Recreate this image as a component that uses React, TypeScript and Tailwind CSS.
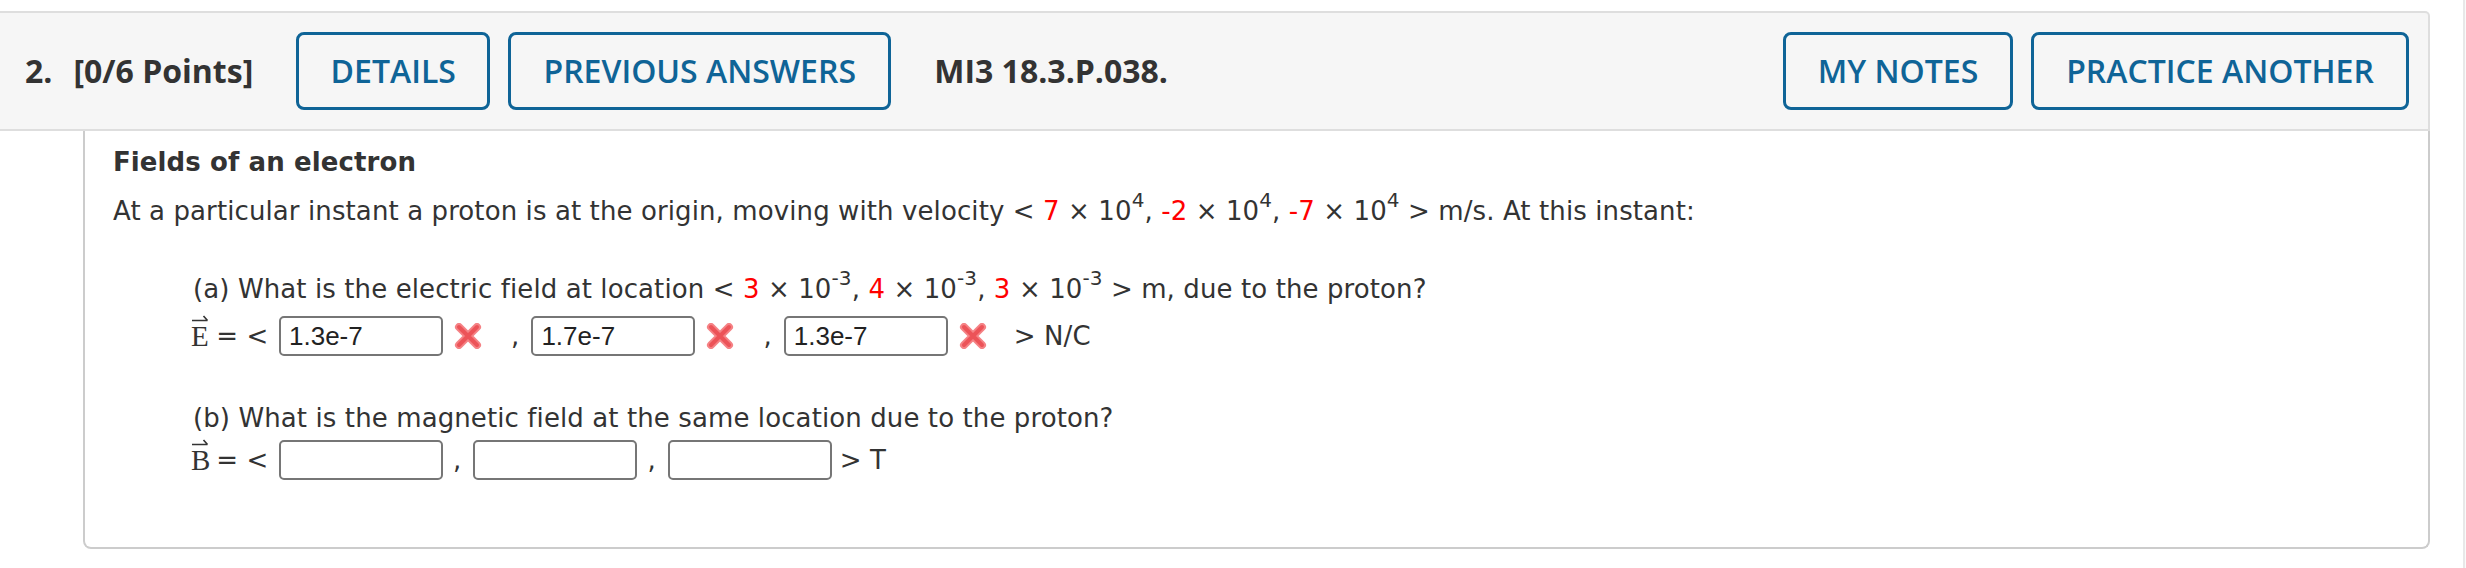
import React from 'react';

// header button with fixed width so the row lines up with the screenshot
function HeaderButton({ label, className }: { label: string; className: string }) {
  return (
    <button
      type="button"
      className={`h-[78px] shrink-0 rounded-[8px] border-[3px] border-[#0f6497] bg-transparent text-[32px] font-semibold uppercase text-[#0f6497] ${className}`}
    >
      {label}
    </button>
  );
}

// vector label, e.g. E with the arrow over it, followed by "= <"
function VecLabel({ letter }: { letter: string }) {
  return (
    <span className="flex w-[88px] shrink-0 items-center overflow-visible whitespace-pre">
      <span className="relative inline-block w-[17px] shrink-0 font-['Liberation_Serif',serif] text-[29px] leading-none">
        <svg className="absolute left-0 top-[-9px] h-[10px] w-[18px]" viewBox="0 0 18 10">
          <path d="M1 7.5 H16.5 M16.5 7.5 L12.5 3" stroke="#333" strokeWidth="1.6" fill="none" />
        </svg>
        {letter}
      </span>
      <span> = &lt;</span>
    </span>
  );
}

function WrongMark() {
  return (
    <svg width="28" height="26" viewBox="0 0 28 26" className="ml-[11px] shrink-0">
      <path d="M5 4 L23 22 M23 4 L5 22" stroke="#f58285" strokeWidth="8" strokeLinecap="round" />
      <path d="M5 4 L23 22 M23 4 L5 22" stroke="#ec5358" strokeWidth="4" strokeLinecap="round" />
    </svg>
  );
}

function AnswerBox({ value = '' }: { value?: string }) {
  return (
    <input
      readOnly
      value={value}
      className="h-[40px] w-[164px] shrink-0 rounded-[5px] border-2 border-[#767676] bg-white px-[8px] font-['Liberation_Sans',Arial,sans-serif] text-[26px] tracking-normal text-[#222] outline-none"
    />
  );
}

const Red = ({ children }: { children: React.ReactNode }) => (
  <span className="text-[#ff0000]">{children}</span>
);

const Sup = ({ children }: { children: React.ReactNode }) => (
  <sup className="top-[-13px] text-[20px]">{children}</sup>
);

export default function App() {
  return (
    <div className="flex min-h-[568px] w-full bg-white text-[#333]">
      <div className="flex-1 pt-[11px]">
        {/* question header */}
        <div className="mr-[33px] flex h-[120px] items-center rounded-tr-[5px] border-y-2 border-r-2 border-[#dedede] bg-[#f6f6f6] pl-[25px] pr-[19px] font-['Open_Sans',sans-serif]">
          <span className="text-[32px] font-bold">2.</span>
          <span className="ml-[21px] text-[32px] font-bold">[0/6 Points]</span>
          <HeaderButton label="Details" className="ml-[43px] w-[194px]" />
          <HeaderButton label="Previous Answers" className="ml-[18px] w-[383px]" />
          <span className="ml-[43px] text-[32px] font-bold">MI3 18.3.P.038.</span>
          <div className="ml-auto flex gap-[18px]">
            <HeaderButton label="My Notes" className="w-[230px]" />
            <HeaderButton label="Practice Another" className="w-[378px]" />
          </div>
        </div>

        {/* question body */}
        <div className="ml-[83px] mr-[33px] rounded-b-[8px] border-x-2 border-b-2 border-[#cccccc] pb-[67px] pl-[28px] pt-[15px] font-['DejaVu_Sans',Verdana,sans-serif] text-[26px] leading-[32px] tracking-[0.1px]">
          <div className="font-bold">Fields of an electron</div>
          <div className="mt-[17px] whitespace-nowrap">
            At a particular instant a proton is at the origin, moving with velocity &lt; <Red>7</Red> × 10<Sup>4</Sup>,{' '}
            <Red>-2</Red> × 10<Sup>4</Sup>, <Red>-7</Red> × 10<Sup>4</Sup> &gt; m/s. At this instant:
          </div>

          <div className="pl-[78px]">
            <div className="mt-[46px] whitespace-nowrap pl-[2px]">
              (a) What is the electric field at location &lt; <Red>3</Red> × 10<Sup>-3</Sup>, <Red>4</Red> × 10
              <Sup>-3</Sup>, <Red>3</Red> × 10<Sup>-3</Sup> &gt; m, due to the proton?
            </div>
            <div className="mt-[11px] flex h-[40px] items-center whitespace-pre">
              <VecLabel letter="E" />
              <AnswerBox value="1.3e-7" />
              <WrongMark />
              <span className="ml-[29px] mr-[12px]">,</span>
              <AnswerBox value="1.7e-7" />
              <WrongMark />
              <span className="ml-[29px] mr-[12px]">,</span>
              <AnswerBox value="1.3e-7" />
              <WrongMark />
              <span className="ml-[27px]">&gt; N/C</span>
            </div>

            <div className="mt-[46px] whitespace-nowrap pl-[2px]">
              (b) What is the magnetic field at the same location due to the proton?
            </div>
            <div className="mt-[6px] flex h-[40px] items-center whitespace-pre">
              <VecLabel letter="B" />
              <AnswerBox />
              <span className="ml-[10px] mr-[12px]">,</span>
              <AnswerBox />
              <span className="ml-[10px] mr-[12px]">,</span>
              <AnswerBox />
              <span className="ml-[8px]">&gt; T</span>
            </div>
          </div>
        </div>
      </div>
      {/* page scrollbar edge */}
      <div className="w-[3px] shrink-0 border-l-2 border-[#e8e8e8] bg-[#fafafa]" />
    </div>
  );
}
